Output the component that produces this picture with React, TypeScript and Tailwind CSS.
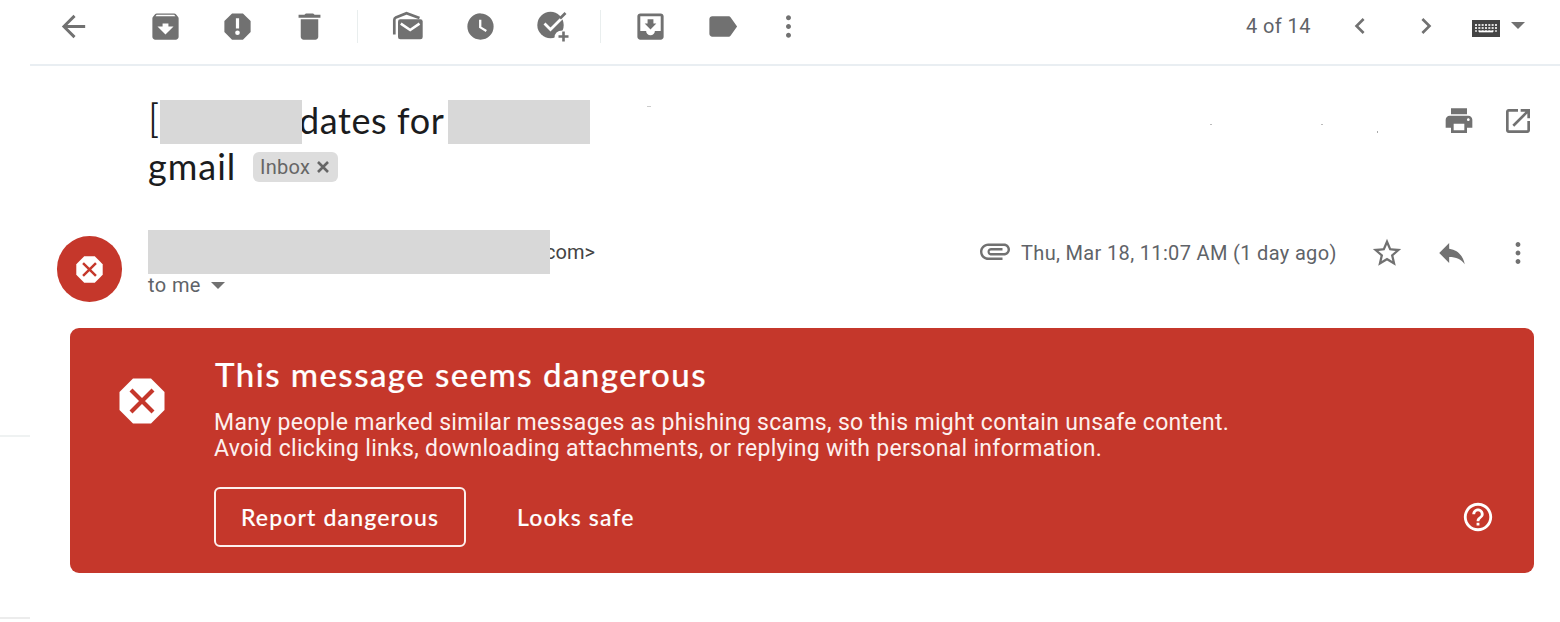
import type { ReactNode } from 'react';

interface IconProps {
  d: string;
  className?: string;
}

function Icon({ d, className = 'w-[35px] h-[35px]' }: IconProps) {
  return (
    <svg viewBox="0 0 24 24" fill="currentColor" className={`shrink-0 ${className}`}>
      <path fillRule="evenodd" d={d} />
    </svg>
  );
}

const icons = {
  back: 'M20 11H7.83l5.59-5.59L12 4l-8 8 8 8 1.41-1.41L7.83 13H20v-2z',
  archive:
    'M20.54 5.23l-1.39-1.68C18.88 3.21 18.47 3 18 3H6c-.47 0-.88.21-1.16.55L3.46 5.23C3.17 5.57 3 6.02 3 6.5V19c0 1.1.9 2 2 2h14c1.1 0 2-.9 2-2V6.5c0-.48-.17-.93-.46-1.27zM12 17.5L6.5 12H10v-2h4v2h3.5L12 17.5zM5.12 5l.81-1h12l.94 1H5.12z',
  spam: 'M15.73 3H8.27L3 8.27v7.46L8.27 21h7.46L21 15.73V8.27L15.73 3zM12 17.9a1.6 1.6 0 1 1 0-3.2 1.6 1.6 0 0 1 0 3.2zM13.1 13.4h-2.2V6.4h2.2z',
  trash: 'M6 19c0 1.1.9 2 2 2h8c1.1 0 2-.9 2-2V7H6v12zM19.5 4h-4l-1-1h-5l-1 1h-4v2h15V4z',
  clock: 'M12 3a9 9 0 1 0 0 18 9 9 0 0 0 0-18zM15.6 15.8L11 12.9V7.4h1.6v4.7l3.8 2.3z',
  move: 'M19 3H5c-1.1 0-2 .9-2 2v14c0 1.1.9 2 2 2h14c1.1 0 2-.9 2-2V5c0-1.1-.9-2-2-2zm0 12h-4c0 1.66-1.35 3-3 3s-3-1.34-3-3H5V5h14v10zM16 10h-2V7h-4v3H8l4 4 4-4z',
  label:
    'M17.63 5.84C17.27 5.33 16.67 5 16 5L5 5.01C3.9 5.01 3 5.9 3 7v10c0 1.1.9 1.99 2 1.99L16 19c.67 0 1.27-.33 1.63-.84L22 12l-4.37-6.16z',
  more: 'M12 7.7c.9 0 1.7-.8 1.7-1.7s-.8-1.7-1.7-1.7-1.7.8-1.7 1.7.8 1.7 1.7 1.7zm0 2.6c-.9 0-1.7.8-1.7 1.7s.8 1.7 1.7 1.7 1.7-.8 1.7-1.7-.8-1.7-1.7-1.7zm0 6c-.9 0-1.7.8-1.7 1.7s.8 1.7 1.7 1.7 1.7-.8 1.7-1.7-.8-1.7-1.7-1.7z',
  left: 'M15.41 7.41L14 6l-6 6 6 6 1.41-1.41L10.83 12z',
  right: 'M10 6L8.59 7.41 13.17 12l-4.58 4.59L10 18l6-6z',
  print:
    'M19 8H5c-1.66 0-3 1.34-3 3v6h4v4h12v-4h4v-6c0-1.66-1.34-3-3-3zm-3 11H8v-5h8v5zm3-7c-.55 0-1-.45-1-1s.45-1 1-1 1 .45 1 1-.45 1-1 1zM18 2.5H6V7h12V2.5z',
  open: 'M19 19H5V5h7V3H5c-1.11 0-2 .9-2 2v14c0 1.1.89 2 2 2h14c1.1 0 2-.9 2-2v-7h-2v7zM14 3v2h3.59l-9.83 9.83 1.41 1.41L19 6.41V10h2V3h-7z',
  star: 'M22 9.24l-7.19-.62L12 2 9.19 8.63 2 9.24l5.46 4.73L5.82 21 12 17.27 18.18 21l-1.63-7.03L22 9.24zM12 15.4l-3.76 2.27 1-4.28-3.32-2.88 4.38-.38L12 6.1l1.71 4.04 4.38.38-3.32 2.88 1 4.28L12 15.4z',
  reply: 'M10 9V5l-7 7 7 7v-4.1c5 0 8.5 1.6 11 5.1-1-5-4-10-11-11z',
  clip: 'M2 12.5C2 9.46 4.46 7 7.5 7H18c2.21 0 4 1.79 4 4s-1.79 4-4 4H9.5C8.12 15 7 13.88 7 12.5S8.12 10 9.5 10H17v1.6H9.4c-.55 0-1 .4-1 .9s.45.9 1 .9H18c1.38 0 2.4-1.02 2.4-2.4S19.38 8.6 18 8.6H7.5c-2.14 0-3.9 1.76-3.9 3.9s1.76 3.9 3.9 3.9H17V18H7.5C4.46 18 2 15.54 2 12.5z',
  help: 'M11 18h2v-2h-2v2zm1-16C6.48 2 2 6.48 2 12s4.48 10 10 10 10-4.48 10-10S17.52 2 12 2zm0 18c-4.41 0-8-3.59-8-8s3.59-8 8-8 8 3.59 8 8-3.59 8-8 8zm0-14c-2.21 0-4 1.79-4 4h2c0-1.1.9-2 2-2s2 .9 2 2c0 2-3 1.75-3 5h2c0-2.25 3-2.5 3-5 0-2.21-1.79-4-4-4z',
};

function ReadIcon() {
  return (
    <svg viewBox="0 0 32 30" className="w-[32px] h-[30px] shrink-0">
      <path d="M2.3 23.5V9q0-1.8 1.5-2.4L14.5 2.2 27.5 7" fill="none" stroke="currentColor" strokeWidth="2.7" />
      <rect x="6" y="8.3" width="24.7" height="20" rx="2.3" fill="currentColor" />
      <path d="M8.8 12.7l9.4 6.3 9.3-6.3" fill="none" stroke="#fff" strokeWidth="2.6" />
    </svg>
  );
}

function TaskIcon() {
  return (
    <svg viewBox="0 0 34 34" className="w-[34px] h-[34px] shrink-0">
      <circle cx="15.5" cy="16" r="13.2" fill="currentColor" />
      <path d="M9.5 14.5l6 6L32 4" fill="none" stroke="#fff" strokeWidth="2.8" />
      <path d="M25 9.5L30.5 4" fill="none" stroke="currentColor" strokeWidth="2.6" />
      <path d="M19.5 34v-5q0-7.5 8-7.5H34V34z" fill="#fff" />
      <path d="M28.5 22.5v10M23.5 27.5h10" stroke="currentColor" strokeWidth="2.6" />
    </svg>
  );
}

function KeyboardIcon() {
  return (
    <svg viewBox="0 0 28 17" className="w-[28px] h-[17px] shrink-0">
      <rect width="28" height="17" fill="#444" />
      <path d="M3 5h22M3 8h22" stroke="#ddd" strokeWidth="2" strokeDasharray="2 1.33" />
      <path d="M3 11h22" stroke="#ddd" strokeWidth="1.5" strokeDasharray="2 1.33" />
      <path d="M7 11.5h14" stroke="#fff" strokeWidth="1.7" />
    </svg>
  );
}

function Octagon({ className }: { className: string }) {
  return (
    <svg viewBox="0 0 46 46" className={`shrink-0 ${className}`}>
      <path d="M14 0.5h18L45.5 14v18L32 45.5H14L0.5 32V14z" fill="#fff" />
      <path d="M12 12l22 22M34 12L12 34" stroke="#c5372b" strokeWidth="4.2" />
    </svg>
  );
}

function Caret() {
  return (
    <svg viewBox="0 0 14 7" className="w-[14px] h-[7px] shrink-0">
      <path d="M0 0h14L7 7z" fill="#717171" />
    </svg>
  );
}

function Tool({ children }: { children: ReactNode }) {
  return <button className="w-[72px] flex justify-center items-center shrink-0">{children}</button>;
}

function Toolbar() {
  return (
    <div className="h-[66px] pb-[12px] flex items-center border-b-2 border-[#e9eef2] text-[#717171]">
      <div className="w-[7px]" />
      <Tool><Icon d={icons.back} /></Tool>
      <div className="w-[20px]" />
      <Tool><Icon d={icons.archive} /></Tool>
      <Tool><Icon d={icons.spam} /></Tool>
      <Tool><Icon d={icons.trash} /></Tool>
      <div className="w-px h-[33px] ml-3 mr-[14px] bg-[#e9eeee]" />
      <Tool><ReadIcon /></Tool>
      <Tool><Icon d={icons.clock} /></Tool>
      <Tool><TaskIcon /></Tool>
      <div className="w-px h-[33px] ml-3 mr-[13px] bg-[#e9eeee]" />
      <Tool><Icon d={icons.move} /></Tool>
      <Tool><Icon d={icons.label} /></Tool>
      <button className="w-[60px] flex justify-center"><Icon d={icons.more} /></button>
      <div className="ml-auto flex items-center pr-[35px]">
        <span className="w-[98px] text-[20px] tracking-[0.4px] text-[#5f6368]">4 of 14</span>
        <Icon d={icons.left} className="w-[32px] h-[32px]" />
        <Icon d={icons.right} className="w-[32px] h-[32px] ml-[34px]" />
        <div className="flex ml-[30px] mt-1 gap-[11px]">
          <KeyboardIcon />
          <div className="pt-[2px]">
            <Caret />
          </div>
        </div>
      </div>
    </div>
  );
}

function Subject() {
  return (
    <div className="relative h-[164px] pt-[32px] pl-[118px] flex text-[#1b1c1e]">
      <div className="font-['Lato'] text-[36px] leading-[44px]">
        <div className="flex h-[46px]">
          <span className="w-[12px] pl-px font-['Roboto'] font-light">[</span>
          <span className="relative z-10 w-[142px] h-[44px] mt-[2px] bg-[#d8d8d8]" />
          <span className="-ml-[3px] w-[149px] whitespace-nowrap tracking-[0.6px]">dates for</span>
          <span className="w-[142px] h-[44px] mt-[2px] bg-[#d8d8d8]" />
        </div>
        <div className="flex h-[46px]">
          <span className="w-[105px] tracking-[1px]">gmail</span>
          <span className="mt-[8px] h-[30px] w-[85px] rounded-[6px] bg-[#ddd] flex items-center pl-[7px] gap-[7px] font-['Roboto'] text-[20px] tracking-[0.3px] text-[#666]">
            Inbox
            <svg viewBox="0 0 12 12" className="w-[12px] h-[12px]">
              <path d="M1 1l10 10M11 1L1 11" stroke="#666" strokeWidth="2.6" />
            </svg>
          </span>
        </div>
      </div>
      <div className="ml-auto mr-[26px] mt-[7px] flex gap-[27px] text-[#717171]">
        <Icon d={icons.print} className="w-[32px] h-[32px]" />
        <Icon d={icons.open} className="w-[32px] h-[32px]" />
      </div>
      <span className="absolute left-[617px] top-[40px] w-[4px] h-px bg-[#ccc]" />
      <span className="absolute left-[1180px] top-[58px] w-[2px] h-px bg-[#bbb]" />
      <span className="absolute left-[1291px] top-[58px] w-[2px] h-px bg-[#bbb]" />
      <span className="absolute left-[1347px] top-[65px] w-px h-[2px] bg-[#aaa]" />
    </div>
  );
}

function Sender() {
  return (
    <div className="h-[98px] flex text-[#5f6368]">
      <div className="ml-[27px] mt-[6px] w-[65px] h-[66px] rounded-full bg-[#c5372b] flex items-center justify-center shrink-0">
        <Octagon className="w-[27px] h-[27px]" />
      </div>
      <div className="ml-[26px]">
        <div className="flex h-[44px] items-center">
          <span className="relative z-10 w-[402px] h-[44px] bg-[#d8d8d8]" />
          <span className="-ml-[5px] text-[20px] text-[#444]">com&gt;</span>
        </div>
        <div className="flex items-center h-[22px] gap-[10px] text-[20px] tracking-[0.4px]">
          to me
          <Caret />
        </div>
      </div>
      <div className="ml-auto h-[45px] flex items-center text-[20px] tracking-[0.34px] pr-[25px]">
        <Icon d={icons.clip} className="w-[36px] h-[36px] mr-[8px] -mt-[3px] text-[#717171]" />
        <span className="w-[349px]">Thu, Mar 18, 11:07 AM (1 day ago)</span>
        <div className="flex items-center text-[#717171]">
          <Icon d={icons.star} className="w-[34px] h-[34px]" />
          <Icon d={icons.reply} className="w-[34px] h-[34px] ml-[31px]" />
          <Icon d={icons.more} className="w-[34px] h-[34px] ml-[32px]" />
        </div>
      </div>
    </div>
  );
}

function DangerBanner() {
  return (
    <div className="ml-[40px] mr-[26px] h-[245px] rounded-[9px] bg-[#c5372b] text-white flex">
      <Octagon className="w-[46px] h-[46px] ml-[49px] mt-[50px]" />
      <div className="ml-[49px] pt-[25px]">
        <h2 className="pl-px font-['Lato'] font-medium text-[33px] leading-[42px] tracking-[1.45px] [-webkit-text-stroke:0.2px_white]">This message seems dangerous</h2>
        <p className="mt-[15px] text-[23px] leading-[26px] tracking-[0.31px] text-[#fdf0ee] whitespace-nowrap">
          Many people marked similar messages as phishing scams, so this might contain unsafe content.
          <br />
          Avoid clicking links, downloading attachments, or replying with personal information.
        </p>
        <div className="mt-[25px] flex font-['Lato'] font-medium text-[23px] tracking-[1.15px] [-webkit-text-stroke:0.15px_white]">
          <button className="w-[252px] h-[60px] rounded-[6px] border-2 border-[#fdf0ee] whitespace-nowrap">Report dangerous</button>
          <button className="ml-[51px] whitespace-nowrap">Looks safe</button>
        </div>
      </div>
      <Icon d={icons.help} className="w-[34px] h-[34px] ml-auto mr-[39px] mt-[172px]" />
    </div>
  );
}

export default function App() {
  return (
    <div className="w-[1560px] h-[622px] flex bg-white overflow-hidden font-['Roboto',sans-serif]">
      <aside className="w-[30px] shrink-0">
        <div className="h-[437px] border-b-2 border-[#eff2f2]" />
        <div className="h-[182px] border-b-2 border-[#ececec]" />
      </aside>
      <main className="flex-1">
        <Toolbar />
        <Subject />
        <Sender />
        <DangerBanner />
      </main>
    </div>
  );
}
